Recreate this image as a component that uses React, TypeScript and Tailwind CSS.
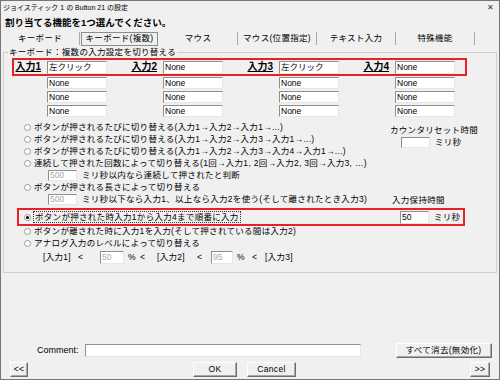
import React from 'react';

const font = "font-['Liberation_Sans','Noto_Sans_CJK_JP',sans-serif]";

function Box({ value = '', w = 'w-[60px]', h = 'h-[13px]', dim = false }: { value?: string; w?: string; h?: string; dim?: boolean }) {
  return (
    <div
      className={`${w} ${h} shrink-0 bg-white border border-t-[#8f8f8f] border-l-[#8f8f8f] border-b-[#e6e6e6] border-r-[#e6e6e6] flex items-center pl-[1px] text-[8.5px] leading-none tracking-normal ${
        dim ? 'text-[#a8a8a8]' : 'text-black'
      }`}
    >
      {value}
    </div>
  );
}

function Radio({ checked = false }: { checked?: boolean }) {
  return (
    <span className="w-[7px] h-[7px] shrink-0 rounded-full border border-[#9a9a9a] bg-white flex items-center justify-center">
      {checked && <span className="w-[3px] h-[3px] rounded-full bg-black" />}
    </span>
  );
}

function Option({ text, h = 'h-[12px]' }: { text: string; h?: string }) {
  return (
    <div className={`${h} flex items-center gap-[3px] pl-[20px]`}>
      <Radio />
      <span className="whitespace-nowrap">{text}</span>
    </div>
  );
}

function Button({ label, w }: { label: string; w: string }) {
  return (
    <div
      className={`${w} h-[15px] shrink-0 flex items-center justify-center bg-[#f0f0f0] border border-t-white border-l-white border-b-[#6d6d6d] border-r-[#6d6d6d] shadow-[inset_-1px_-1px_0_#a8a8a8] text-[8.5px] leading-none`}
    >
      {label}
    </div>
  );
}

const tabs = ['キーボード', 'キーボード(複数)', 'マウス', 'マウス(位置指定)', 'テキスト入力', '特殊機能'];
const inputCols = ['入力1', '入力2', '入力3', '入力4'];
const firstRow = ['左クリック', 'None', '左クリック', 'None'];

export default function App() {
  return (
    <div className={`${font} w-[500px] h-[380px] bg-[#f0f0f0] border border-[#767676] flex flex-col text-black text-[8.5px] leading-none tracking-[0.3px] overflow-hidden`}>
      {/* title bar */}
      <div className="h-[13px] flex items-center justify-between pl-[2px] pr-[5px]">
        <span className="text-[7px] tracking-normal">ジョイスティック 1 の Button 21 の設定</span>
        <span className="text-[8px] text-[#333]">✕</span>
      </div>

      <div className="h-[17px] flex items-center pl-[4px] text-[9.5px] font-bold tracking-normal">割り当てる機能を1つ選んでください。</div>

      {/* tabs */}
      <div className="h-[15px] flex items-center">
        {tabs.map((t, i) =>
          i === 1 ? (
            <div key={t} className="w-[79px] h-[14px] px-[1px]">
              <div className="h-full border border-[#8c8c8c] flex items-center justify-center">{t}</div>
            </div>
          ) : (
            <div key={t} className="w-[79px] h-[13px] border-r border-[#a8a8a8] flex items-center justify-center">
              {t}
            </div>
          )
        )}
      </div>

      {/* group box */}
      <div className="relative mt-[6px] mx-[2px] h-[221px] border border-[#cfcfcf] pt-[5px]">
        <span className="absolute -top-[6px] left-[4px] px-[1px] bg-[#f0f0f0] leading-[11px]">キーボード：複数の入力設定を切り替える</span>

        <div className="ml-[8px] w-[455px] h-[18px] border-2 border-[#e8202a] flex items-center">
          {inputCols.map((c, i) => (
            <div key={c} className="w-[116px] shrink-0 flex items-center">
              <span className="w-[27px] text-right text-[10px] font-bold tracking-normal underline underline-offset-[1px]">{c}</span>
              <span className="ml-[6px]">
                <Box value={firstRow[i]} />
              </span>
            </div>
          ))}
        </div>

        <div className="ml-[10px] mt-[1px] flex flex-col gap-[2px]">
          {[0, 1, 2].map((r) => (
            <div key={r} className="flex">
              {inputCols.map((c) => (
                <div key={c} className="w-[116px] shrink-0 pl-[33px]">
                  <Box value="None" h="h-[12px]" />
                </div>
              ))}
            </div>
          ))}
        </div>

        <div className="mt-[4px] h-[84px] flex">
          <div className="w-[386px] shrink-0 flex flex-col">
            <Option text="ボタンが押されるたびに切り替える(入力1→入力2→入力1→...)" />
            <Option text="ボタンが押されるたびに切り替える(入力1→入力2→入力3→入力1→...)" />
            <Option text="ボタンが押されるたびに切り替える(入力1→入力2→入力3→入力4→入力1→...)" />
            <Option text="連続して押された回数によって切り替える(1回→入力1, 2回→入力2, 3回→入力3, …)" />
            <div className="h-[12px] flex items-center pl-[44px]">
              <Box value="500" w="w-[29px]" h="h-[11px]" dim />
              <span className="ml-[5px] whitespace-nowrap">ミリ秒以内なら連続して押されたと判断</span>
            </div>
            <Option text="ボタンが押される長さによって切り替える" />
            <div className="h-[12px] flex items-center pl-[44px]">
              <Box value="500" w="w-[29px]" h="h-[11px]" dim />
              <span className="ml-[5px] whitespace-nowrap">ミリ秒以下なら入力1、以上なら入力2を使う(そして離されたとき入力3)</span>
            </div>
          </div>
          <div className="flex-1 flex flex-col">
            <span className="mt-[4px] h-[10px] flex items-center whitespace-nowrap">カウンタリセット時間</span>
            <div className="mt-[2px] pl-[11px] flex items-center">
              <Box w="w-[29px]" h="h-[11px]" />
              <span className="ml-[5px]">ミリ秒</span>
            </div>
            <span className="mt-[48px] h-[10px] pl-[2px] flex items-center whitespace-nowrap">入力保持時間</span>
          </div>
        </div>

        <div className="mt-[3px] ml-[13px] w-[448px] h-[18px] border-2 border-[#e8202a] flex items-center">
          <div className="w-[381px] shrink-0 flex items-center gap-[2px] pl-[5px]">
            <Radio checked />
            <span className="border border-dotted border-[#333] px-[1px] h-[12px] flex items-center whitespace-nowrap">
              ボタンが押された時入力1から入力4まで順番に入力
            </span>
          </div>
          <Box value="50" w="w-[29px]" />
          <span className="ml-[5px]">ミリ秒</span>
        </div>

        <Option text="ボタンが離された時に入力1を入力(そして押されている間は入力2)" h="h-[11px]" />
        <Option text="アナログ入力のレベルによって切り替える" h="h-[13px]" />

        <div className="h-[14px] flex items-center pl-[39px] whitespace-nowrap">
          <span className="w-[35px]">[入力1]</span>
          <span className="w-[22px]">&lt;</span>
          <Box value="50" w="w-[24px]" dim />
          <span className="ml-[4px] w-[12px]">%</span>
          <span className="w-[17px]">&lt;</span>
          <span className="w-[40px]">[入力2]</span>
          <span className="w-[14px]">&lt;</span>
          <Box value="95" w="w-[22px]" dim />
          <span className="ml-[4px] w-[15px]">%</span>
          <span className="w-[13px]">&lt;</span>
          <span>[入力3]</span>
        </div>
      </div>

      <div className="flex-1" />

      {/* comment row */}
      <div className="h-[15px] flex items-center">
        <span className="ml-[36px] text-[9px] tracking-normal">Comment:</span>
        <div className="ml-[6px] w-[276px] h-[13px] bg-white border border-t-[#8f8f8f] border-l-[#8f8f8f] border-b-[#e6e6e6] border-r-[#e6e6e6]" />
        <span className="ml-[35px]">
          <Button label="すべて消去(無効化)" w="w-[96px]" />
        </span>
      </div>

      {/* bottom buttons */}
      <div className="mt-[4px] mb-[2px] h-[15px] flex items-center">
        <span className="ml-[9px]">
          <Button label="<<" w="w-[18px]" />
        </span>
        <span className="ml-[165px]">
          <Button label="OK" w="w-[44px]" />
        </span>
        <span className="ml-[10px]">
          <Button label="Cancel" w="w-[49px]" />
        </span>
        <span className="ml-[174px]">
          <Button label=">>" w="w-[20px]" />
        </span>
      </div>
    </div>
  );
}
